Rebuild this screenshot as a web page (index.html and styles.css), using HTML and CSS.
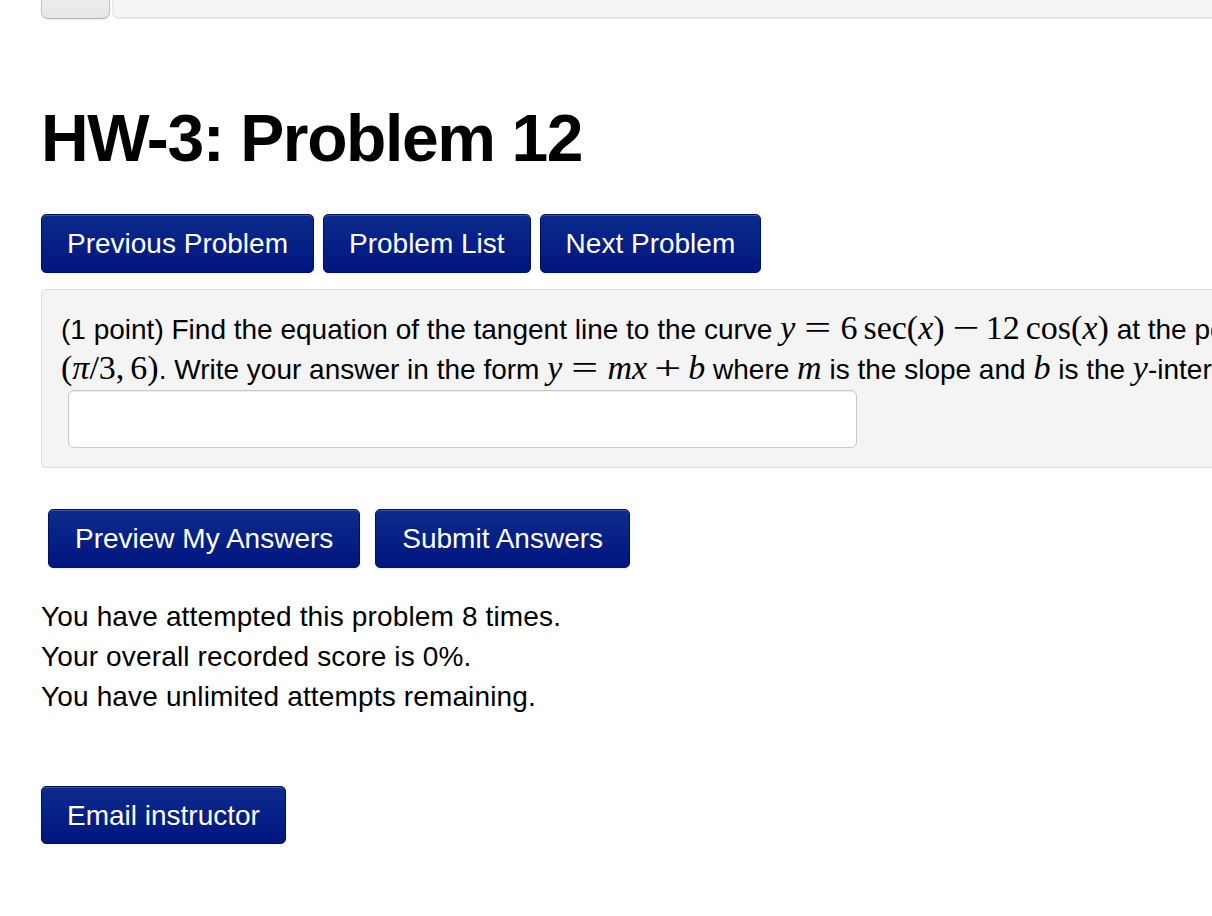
FILE: index.html
```html
<!DOCTYPE html>
<html lang="en">
<head>
    <meta charset="UTF-8">
    <meta name="viewport" content="width=device-width, initial-scale=1.0">
    <title>HW-3: Problem 12</title>
    <link rel="stylesheet" href="styles.css">
</head>
<body>

    <div class="page">
        <div class="topbar">
            <button class="toggle" type="button"></button>
            <div class="well"></div>
        </div>

        <h1>HW-3: Problem 12</h1>

        <div class="nav">
            <button class="btn">Previous Problem</button>
            <button class="btn">Problem List</button>
            <button class="btn">Next Problem</button>
        </div>

        <div class="problem">
            <p>(1 point) Find the equation of the tangent line to the curve
                <span class="math"><i>y</i><span class="rel">=</span>6<span class="thin"></span>sec(<i>x</i>)<span class="bin">&minus;</span>12<span class="thin"></span>cos(<i>x</i>)</span>
                at the point
                <span class="math">(<i>&pi;</i>/3,<span class="thin"></span>6)</span>. Write your answer in the form
                <span class="math"><i>y</i><span class="rel">=</span><i>mx</i><span class="bin">+</span><i>b</i></span>
                where <span class="math"><i>m</i></span> is the slope and <span class="math"><i>b</i></span> is the <span class="math"><i>y</i></span>-intercept.</p>
            <input class="answer" type="text">
        </div>

        <div class="submit-row">
            <button class="btn">Preview My Answers</button>
            <button class="btn">Submit Answers</button>
        </div>

        <div class="status">
            <p>You have attempted this problem 8 times.</p>
            <p>Your overall recorded score is 0%.</p>
            <p>You have unlimited attempts remaining.</p>
        </div>

        <button class="btn email">Email instructor</button>
    </div>

</body>
</html>
```

FILE: styles.css
```css
html, body {
    overflow: hidden;
}
body {
    margin: 0;
    font-family: "Liberation Sans", Arial, sans-serif;
    font-size: 28px;
    line-height: 40px;
    color: #000;
    background: #fff;
}
.page {
    width: 1500px;
    padding-left: 41px;
}
.topbar {
    display: flex;
    gap: 2px;
    height: 49px;
    margin-top: -30px;
}
.toggle {
    width: 69px;
    height: 49px;
    border: 1px solid #c4c4c4;
    border-bottom-color: #b3b3b3;
    border-radius: 0 0 7px 7px;
    background: linear-gradient(#f8f8f8, #e6e6e6);
    box-shadow: 0 1px 2px rgba(0, 0, 0, 0.08);
}
.well {
    flex: 1;
    background-color: #f4f4f4;
    border: 1px solid #e6e6e6;
    border-bottom-width: 2px;
    border-radius: 0 0 0 7px;
}
h1 {
    font-size: 66px;
    line-height: 74px;
    letter-spacing: -1.4px;
    margin: 82px 0 39px;
}
.nav, .submit-row {
    display: flex;
    gap: 9px;
}
.btn {
    font-family: "Liberation Sans", Arial, sans-serif;
    font-size: 28px;
    line-height: 39px;
    height: 59px;
    padding: 0 25px;
    color: #fff;
    background: linear-gradient(#0c2b8c, #001580);
    border: 1px solid #00115f;
    border-radius: 5px;
    box-shadow: inset 0 1px 0 rgba(255, 255, 255, 0.2), 0 1px 2px rgba(0, 0, 0, 0.08);
    cursor: pointer;
}
.problem {
    width: 1290px;
    margin-top: 16px;
    padding: 20px 19px 19px;
    background-color: #f4f4f4;
    border: 1px solid #dedede;
    border-radius: 4px;
}
.problem p {
    margin: 0;
}
.math {
    font-family: "Liberation Serif", "Times New Roman", serif;
    font-size: 34px;
    line-height: 1;
    white-space: nowrap;
}
.math i {
    font-style: italic;
}
/* wider = and − like the math font */
.rel, .bin {
    display: inline-block;
    transform: scaleX(1.4);
    margin: 0 13px;
}
.bin {
    margin: 0 11px;
}
.thin {
    display: inline-block;
    width: 6px;
}
.answer {
    display: block;
    width: 789px;
    height: 58px;
    margin-left: 7px;
    box-sizing: border-box;
    border: 1px solid #c8c8c8;
    border-radius: 6px;
    background: #fff;
    box-shadow: inset 0 1px 1px rgba(0, 0, 0, 0.075);
    font-size: 28px;
}
.submit-row {
    gap: 15px;
    margin: 41px 0 0 7px;
}
.submit-row .btn {
    padding: 0 26px;
}
.status {
    margin-top: 29px;
    letter-spacing: 0.15px;
}
.status p {
    margin: 0;
}
.email {
    margin-top: 69px;
    height: 58px;
}
```
